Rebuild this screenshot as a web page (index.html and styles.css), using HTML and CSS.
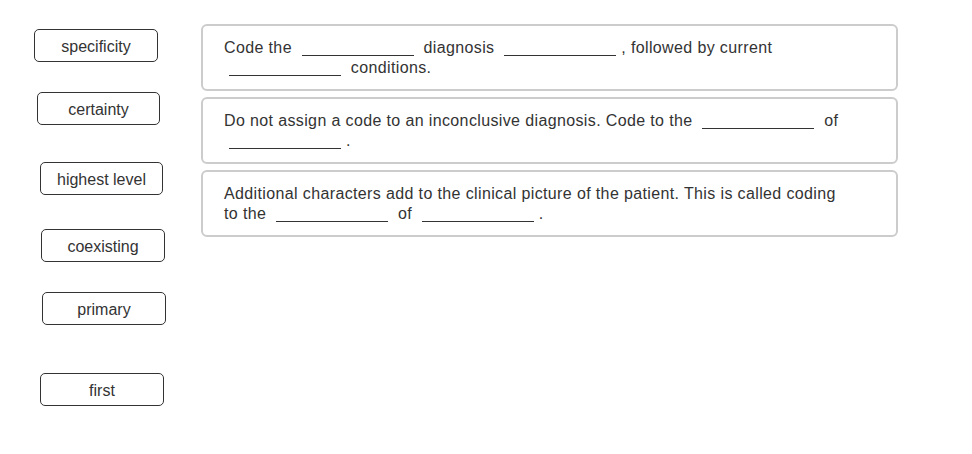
FILE: index.html
```html
<!DOCTYPE html>
<html>
<head>
<meta charset="utf-8">
<link rel="stylesheet" href="styles.css">
</head>
<body>
<div class="page">
  <div class="bank">
    <div class="tile t1">specificity</div>
    <div class="tile t2">certainty</div>
    <div class="tile t3">highest level</div>
    <div class="tile t4">coexisting</div>
    <div class="tile t5">primary</div>
    <div class="tile t6">first</div>
  </div>
  <div class="questions">
    <div class="q">Code the <span class="blank"></span> diagnosis <span class="blank"></span>, followed by current <span class="blank"></span> conditions.</div>
    <div class="q">Do not assign a code to an inconclusive diagnosis. Code to the <span class="blank"></span> of <span class="blank"></span>.</div>
    <div class="q">Additional characters add to the clinical picture of the patient. This is called coding to the <span class="blank"></span> of <span class="blank"></span>.</div>
  </div>
</div>
</body>
</html>
```
FILE: styles.css
```css
html, body {
  margin: 0;
  padding: 0;
  background: #ffffff;
}
body {
  font-family: "Liberation Sans", Arial, sans-serif;
  color: #333333;
}
.page {
  display: flex;
  align-items: flex-start;
  padding: 24px 0 0 0;
}
.bank {
  width: 201px;
  display: flex;
  flex-direction: column;
  align-items: flex-start;
}
.tile {
  box-sizing: border-box;
  width: 124px;
  height: 33px;
  border: 1px solid #333333;
  border-radius: 5px;
  font-size: 16px;
  padding-top: 2px;
  line-height: 29px;
  text-align: center;
  color: #333333;
}
.t1 { margin: 5px 0 0 34px; }
.t2 { margin: 30px 0 0 37px; width: 123px; }
.t3 { margin: 37px 0 0 40px; width: 123px; }
.t4 { margin: 34px 0 0 41px; }
.t5 { margin: 30px 0 0 42px; }
.t6 { margin: 48px 0 0 40px; }
.questions {
  width: 697px;
  display: flex;
  flex-direction: column;
  gap: 6px;
}
.q {
  box-sizing: border-box;
  height: 67px;
  border: 2px solid #cccccc;
  border-radius: 6px;
  padding: 12px 50px 0 21px;
  font-size: 16px;
  line-height: 20px;
  letter-spacing: 0.37px;
  color: #333333;
}
.blank {
  display: inline-block;
  width: 112px;
  height: 12px;
  margin: 0 5px;
  border-bottom: 1px solid #333333;
  vertical-align: -3px;
}
```
